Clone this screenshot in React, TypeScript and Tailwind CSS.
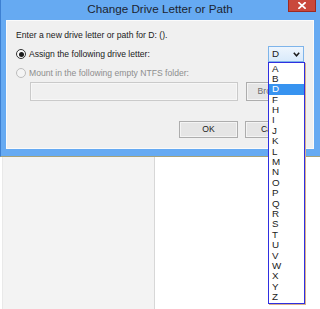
const LETTERS = ['A', 'B', 'D', 'F', 'H', 'I', 'J', 'K', 'L', 'M', 'N', 'O', 'P', 'Q', 'R', 'S', 'T', 'U', 'V', 'W', 'X', 'Y', 'Z'];

const FONT = { fontFamily: '"Liberation Sans", Arial, sans-serif' };

function Radio({ checked, disabled }: { checked?: boolean; disabled?: boolean }) {
  return (
    <span
      className={`flex h-[10px] w-[10px] shrink-0 items-center justify-center rounded-full border ${
        disabled ? 'border-[#bdbdbd] bg-[#f4f4f4]' : 'border-[#333333] bg-[#fafafa]'
      }`}
    >
      {checked && <span className="h-[5px] w-[5px] rounded-full bg-[#1b1b1b]" />}
    </span>
  );
}

function Button({ children, className = '' }: { children: React.ReactNode; className?: string }) {
  return (
    <div
      className={`flex h-[17px] w-[59px] items-center justify-center border border-[#adadad] bg-[#e5e5e5] text-[8.6px] leading-none text-[#1a1a1a] shadow-[inset_0_0_0_1px_#f4f4f4] ${className}`}
    >
      {children}
    </div>
  );
}

function DriveList() {
  return (
    <div className="absolute left-[261px] top-[41px] z-20 w-[37px] border border-[#2f2fe0] bg-white py-[0.5px] shadow-[1px_1px_0_#d8b08a]">
      {LETTERS.map((l) => (
        <div
          key={l}
          className={`h-[10.4px] overflow-hidden pl-[3px] text-[9.8px] leading-[10.4px] ${
            l === 'D' ? 'bg-[#3793f0] text-white' : 'text-[#222222]'
          }`}
        >
          {l}
        </div>
      ))}
    </div>
  );
}

export default function App() {
  return (
    <div className="h-[309px] w-[320px] overflow-hidden bg-white" style={FONT}>
      {/* ── Dialog window ── */}
      <div className="relative z-10 border-b border-l border-b-[#a5a27a] border-l-[#3d80d2] bg-[#66aaf2] px-[6px] pb-[7px] pl-[5px]">
        <div className="relative h-[20px]">
          <p className="text-center text-[11.7px] leading-[17px] text-[#1c2430]">Change Drive Letter or Path</p>
          <div className="absolute right-[-2px] top-0 flex h-[12px] w-[28px] items-center justify-center border border-t-0 border-[#9d2a22] bg-[#c9483b]">
            <svg width="8" height="7" viewBox="0 0 8 7">
              <path d="M1 0.8 L7 6.2 M7 0.8 L1 6.2" stroke="white" strokeWidth="1.8" strokeLinecap="square" />
            </svg>
          </div>
        </div>

        {/* ── Content panel ── */}
        <div className="relative h-[129px] border border-[#fbfbfb] bg-[#f0f0f0] text-[8.6px] text-[#1a1a1a]">
          <p className="ml-[9px] mt-[8px] leading-[12px]">Enter a new drive letter or path for D: ().</p>

          <div className="mx-[9px] mt-[7px] flex h-[12px] items-center justify-between">
            <div className="flex items-center gap-[3px]">
              <Radio checked />
              <span className="leading-[12px]">Assign the following drive letter:</span>
            </div>
            <div className="flex h-[16px] w-[36px] items-center justify-between border border-[#7eb4ea] bg-gradient-to-b from-[#eef5fd] to-[#d9eafb] pl-[3px] pr-[3px]">
              <span className="text-[9.8px] leading-none">D</span>
              <svg width="7" height="5" viewBox="0 0 7 5">
                <path d="M0.8 0.8 L3.5 3.8 L6.2 0.8" fill="none" stroke="#1a1a1a" strokeWidth="1.5" />
              </svg>
            </div>
          </div>

          <div className="ml-[9px] mt-[7px] flex h-[12px] items-center gap-[3px]">
            <Radio disabled />
            <span className="leading-[12px] text-[#8e8e8e]">Mount in the following empty NTFS folder:</span>
          </div>

          <div className="ml-[23px] mt-[3px] flex gap-[8px]">
            <div className="h-[19px] w-[208px] border border-[#cacaca] bg-[#f0f0f0] shadow-[inset_0_0_0_1px_#f7f7f7]" />
            <Button className="h-[19px] w-[58px] text-[#6d6d6d]">Browse...</Button>
          </div>

          <div className="mr-[9px] mt-[20px] flex justify-end gap-[7px]">
            <Button>OK</Button>
            <Button>Cancel</Button>
          </div>

          <DriveList />
        </div>
      </div>

      {/* ── Background below the dialog ── */}
      <div className="flex h-[152px]">
        <div className="ml-[2px] h-full w-[153px] border-l border-r border-l-[#e9e9e9] border-r-[#d7d7d7] bg-[#f3f3f3]" />
        <div className="flex-1 bg-white" />
      </div>
    </div>
  );
}
